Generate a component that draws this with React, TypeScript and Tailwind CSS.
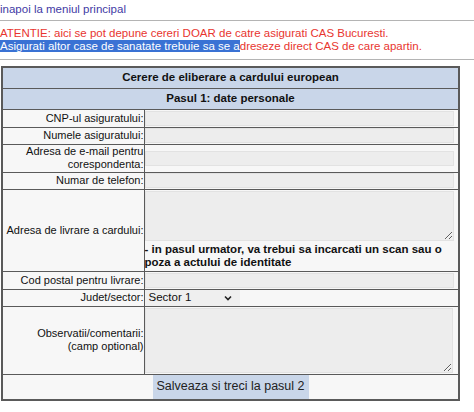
import React from "react";

const font = { fontFamily: '"Liberation Sans", Arial, sans-serif' };

const Input = () => (
  <input
    type="text"
    className="block h-[15px] w-[309px] border border-[#e2e2e2] bg-[#ededed] outline-none"
  />
);

const label = "border border-[#5a5a5a] p-0 text-right text-[11px] whitespace-nowrap";
const field = "border border-[#5a5a5a] p-0";

export default function App() {
  return (
    <div className="w-[474px] bg-white text-[11.5px] leading-[13px] text-[#111]" style={font}>
      <div className="h-[18px] pt-[3px] text-[#3f3aa5]">inapoi la meniul principal</div>
      <hr className="mt-[2px] border-t border-[#b4b4b4]" />
      <div className="pt-[6px] text-[#e8352f] leading-[13px]">
        <div>ATENTIE: aici se pot depune cereri DOAR de catre asigurati CAS Bucuresti.</div>
        <div>
          <span className="bg-[#3a72d4] text-white">Asigurati altor case de sanatate trebuie sa se a</span>
          dreseze direct CAS de care apartin.
        </div>
      </div>
      <hr className="mt-[6px] border-t border-[#b4b4b4]" />

      <table className="ml-[1px] mt-[6px] w-[459px] table-fixed border-collapse border-2 border-[#5a5a5a]">
        <colgroup>
          <col className="w-[142px]" />
          <col />
        </colgroup>
        <tbody>
          <tr className="h-[21px] bg-[#c9d6e9]">
            <td colSpan={2} className="border border-[#5a5a5a] text-center font-bold">
              Cerere de eliberare a cardului european
            </td>
          </tr>
          <tr className="h-[21px] bg-[#c9d6e9]">
            <td colSpan={2} className="border border-[#5a5a5a] text-center font-bold">
              Pasul 1: date personale
            </td>
          </tr>
          <tr className="h-[18px] bg-[#f7f7f7]">
            <td className={label}>CNP-ul asiguratului:</td>
            <td className={field}><Input /></td>
          </tr>
          <tr className="h-[17px] bg-[#f7f7f7]">
            <td className={label}>Numele asiguratului:</td>
            <td className={field}><Input /></td>
          </tr>
          <tr className="h-[28px] bg-[#f7f7f7]">
            <td className={label}>
              Adresa de e-mail pentru
              <br />
              corespondenta:
            </td>
            <td className={field}><Input /></td>
          </tr>
          <tr className="h-[17px] bg-[#f7f7f7]">
            <td className={label}>Numar de telefon:</td>
            <td className={field}><Input /></td>
          </tr>
          <tr className="h-[82px] bg-[#f7f7f7]">
            <td className={label}>Adresa de livrare a cardului:</td>
            <td className={`${field} align-top`}>
              <textarea className="mt-[1px] block h-[50px] w-[309px] resize border border-[#e2e2e2] bg-[#ededed] outline-none" />
              <div className="pt-[2px] font-bold leading-[13px]">
                - in pasul urmator, va trebui sa incarcati un scan sau o
                <br />
                poza a actului de identitate
              </div>
            </td>
          </tr>
          <tr className="h-[18px] bg-[#f7f7f7]">
            <td className={label}>Cod postal pentru livrare:</td>
            <td className={field}><Input /></td>
          </tr>
          <tr className="h-[17px] bg-[#f7f7f7]">
            <td className={label}>Judet/sector:</td>
            <td className={field}>
              <div className="flex h-[16px] w-[95px] items-center justify-between bg-[#efefef] pl-[4px] pr-[8px]">
                <span>Sector 1</span>
                <svg width="8" height="6" viewBox="0 0 8 6">
                  <path d="M1 1.5 L4 4.5 L7 1.5" fill="none" stroke="#222" strokeWidth="1.6" />
                </svg>
              </div>
            </td>
          </tr>
          <tr className="h-[68px] bg-[#f7f7f7]">
            <td className={label}>
              Observatii/comentarii:
              <br />
              (camp optional)
            </td>
            <td className={field}>
              <textarea className="block h-[65px] w-[308px] resize border border-[#e2e2e2] bg-[#ededed] outline-none" />
            </td>
          </tr>
          <tr className="h-[25px] bg-[#f7f7f7]">
            <td colSpan={2} className="border border-[#5a5a5a] p-0 text-center">
              <button className="h-[24px] bg-[#c9d6e9] px-[4px] align-top text-[12.5px] text-[#222]">
                Salveaza si treci la pasul 2
              </button>
            </td>
          </tr>
        </tbody>
      </table>
    </div>
  );
}
